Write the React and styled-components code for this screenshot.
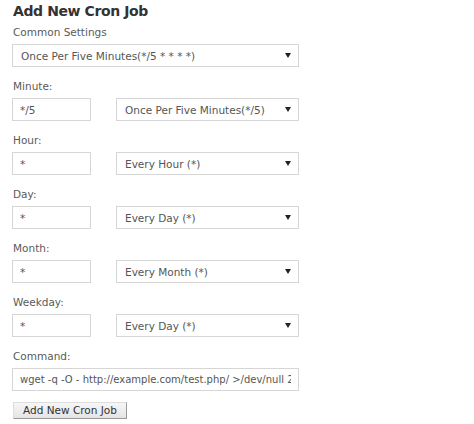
import styled, { createGlobalStyle } from "styled-components";

const GlobalStyle = createGlobalStyle`
  html, body {
    margin: 0;
    padding: 0;
    background: #fff;
  }
  body {
    font-family: "DejaVu Sans", Verdana, sans-serif;
  }
`

const Page = styled.div`
  width: 474px;
  height: 424px;
  box-sizing: border-box;
  padding: 2px 0 0 12px;
  display: flex;
  flex-direction: column;
`

const Title = styled.h3`
  margin: 0 0 0 1px;
  font-size: 14px;
  line-height: 18px;
  font-weight: bold;
  letter-spacing: -0.4px;
  color: #333;
`

const Field = styled.div`
  display: flex;
  flex-direction: column;
  margin-top: ${(p) => p.$top || 0}px;
`

const Label = styled.label`
  font-size: 10.5px;
  line-height: 14px;
  color: #5a5a5a;
  margin: 0 0 5px 1px;
`

const Row = styled.div`
  display: flex;
  gap: 25px;
`

const TextInput = styled.input`
  box-sizing: border-box;
  width: ${(p) => p.$width}px;
  height: 23px;
  padding: 0 7px;
  border: 1px solid #d6d6d6;
  font-family: "DejaVu Sans", Verdana, sans-serif;
  font-size: ${(p) => p.$size || 10.5}px;
  color: #555;
  background: #fff;
  outline: none;
`

const SelectWrap = styled.div`
  position: relative;
  width: ${(p) => p.$width}px;
  height: 23px;
`

const Select = styled.select`
  appearance: none;
  box-sizing: border-box;
  width: 100%;
  height: 100%;
  padding: 0 0 0 8px;
  border: 1px solid #d6d6d6;
  border-radius: 0;
  background: #fff;
  font-family: "DejaVu Sans", Verdana, sans-serif;
  font-size: 10.5px;
  color: #555;
  outline: none;
`

const Arrow = styled.span`
  position: absolute;
  right: 8px;
  top: 9px;
  width: 0;
  height: 0;
  border-left: 3px solid transparent;
  border-right: 3px solid transparent;
  border-top: 5px solid #222;
  pointer-events: none;
`

const Button = styled.button`
  align-self: flex-start;
  margin: 11px 0 0 1px;
  height: 17px;
  padding: 0 9px;
  border: 1px solid #ddd;
  border-right-color: #999;
  border-bottom-color: #999;
  background: linear-gradient(#f6f6f6, #e4e4e4);
  font-family: "DejaVu Sans", Verdana, sans-serif;
  font-size: 10.5px;
  line-height: 15px;
  color: #333;
`

function Dropdown({ width, value }) {
  return (
    <SelectWrap $width={width}>
      <Select defaultValue={value}>
        <option>{value}</option>
      </Select>
      <Arrow />
    </SelectWrap>
  )
}

const fields = [
  { label: "Minute:", value: "*/5", option: "Once Per Five Minutes(*/5)" },
  { label: "Hour:", value: "*", option: "Every Hour (*)" },
  { label: "Day:", value: "*", option: "Every Day (*)" },
  { label: "Month:", value: "*", option: "Every Month (*)" },
  { label: "Weekday:", value: "*", option: "Every Day (*)" },
]

export default function App() {
  return (
    <>
      <GlobalStyle />
      <Page>
        <Title>Add New Cron Job</Title>
        <Field $top={5}>
          <Label>Common Settings</Label>
          <Dropdown width={287} value="Once Per Five Minutes(*/5 * * * *)" />
        </Field>
        {fields.map((f) => (
          <Field key={f.label} $top={12}>
            <Label>{f.label}</Label>
            <Row>
              <TextInput $width={79} defaultValue={f.value} />
              <Dropdown width={183} value={f.option} />
            </Row>
          </Field>
        ))}
        <Field $top={12}>
          <Label>Command:</Label>
          <TextInput
            $width={287}
            $size={10}
            defaultValue="wget -q -O - http://example.com/test.php/ >/dev/null 2>&1"
          />
        </Field>
        <Button>Add New Cron Job</Button>
      </Page>
    </>
  )
}
